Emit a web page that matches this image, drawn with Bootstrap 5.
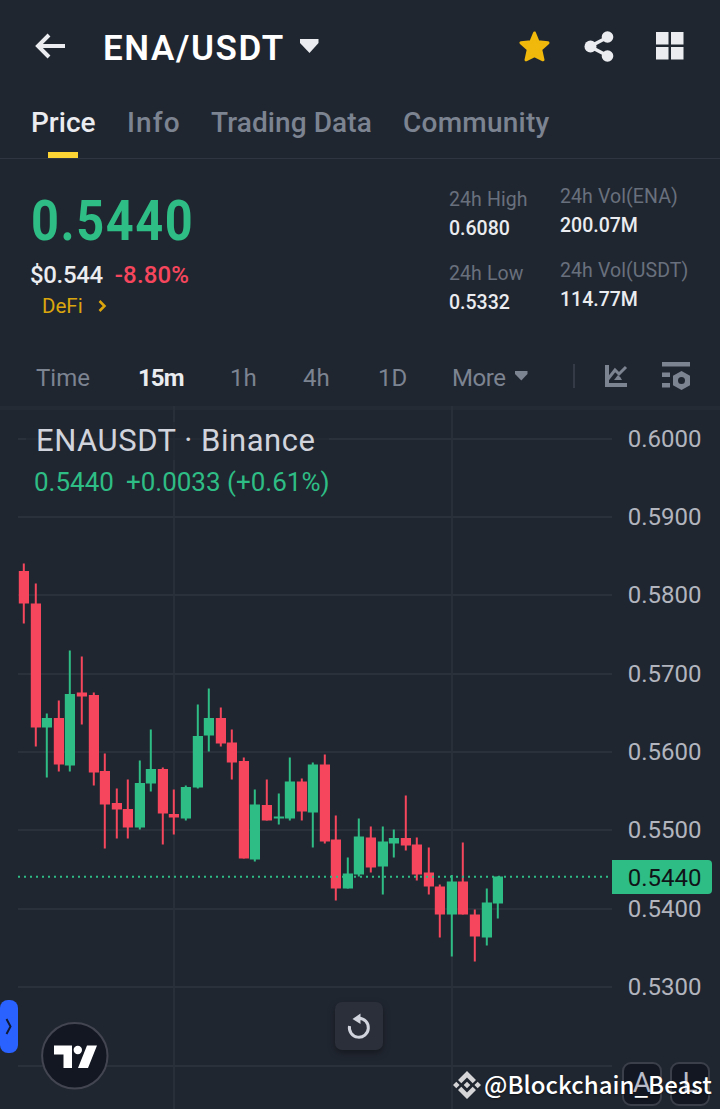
<!DOCTYPE html>
<html lang="en">
<head>
<meta charset="utf-8">
<meta name="viewport" content="width=device-width, initial-scale=1">
<title>ENA/USDT</title>
<link rel="stylesheet" href="https://cdn.jsdelivr.net/npm/bootstrap@5.3.0/dist/css/bootstrap.min.css">
<style>
:root{--up:#2ebd85;--down:#f6465d;--muted:#7c8391;--light:#eaecef;--base:#202630}
html,body{width:720px;height:1109px;overflow:hidden}
body{background:var(--base);font-family:Roboto,"Noto Sans",sans-serif;color:var(--light);white-space:nowrap}
svg{display:block}
.topbar{height:98px;padding:0 36px 6px 35px}
.pair{font-size:35px;font-weight:600;line-height:40px;color:#fff;margin-left:37px;letter-spacing:1.6px;padding-top:5px}
.pair-caret{margin-left:15px}
.tabs-line{display:grid;grid-template-columns:96px 84px 192px 1fr;height:61px;padding-left:31px;border-bottom:1px solid #303641;font-size:28px;font-weight:500;line-height:50px;color:var(--muted)}
.tab-on{color:var(--light);position:relative}
.tab-on::after{content:"";position:absolute;left:17px;bottom:0;width:30px;height:6px;background:#fcd535}
.ticker{display:grid;grid-template-columns:418px 111px 1fr;height:186px;padding:0 0 0 31px}
.last-price{font-size:56px;font-weight:700;line-height:60px;color:var(--up);padding-top:32px;transform:scaleX(.87);transform-origin:0 0;letter-spacing:1.8px}
.fiat{font-size:24px;font-weight:500;line-height:30px;margin:9px 0 0 -1px;letter-spacing:-.35px}
.tag-line{font-size:20.5px;line-height:26px;color:#dba60d;margin:3px 0 0 11px}
.stat-name{font-size:19.5px;line-height:28px;color:#69707d;letter-spacing:.1px}
.stat-val{font-size:19.5px;font-weight:500;line-height:28px;margin:1px 0 17px;letter-spacing:0}
.intervals{display:grid;grid-template-columns:102px 92px 73px 75px 74px 121px 32px 58px 1fr;height:61px;padding-left:36px;font-size:24px;line-height:66px;color:var(--muted)}
.chart-area{height:703px}
.legend{left:26px;top:16px}
.legend-name{font-size:31px;line-height:38px;color:#d1d4dc;letter-spacing:.53px;padding:0 8px 0 10px;background:#202630a0}
.legend-val{font-size:26px;line-height:36px;color:var(--up);margin:4px 0 0 8px}
.axis{font:24px Roboto,sans-serif;fill:#b2b5be}
.pull{left:0;top:594px;width:18px;height:53px;border-radius:8px;background:#2962ff}
.tv{left:41px;top:616px}
.reset{left:335px;top:596px;width:48px;height:48px;border-radius:7px;background:#2a2f39;box-shadow:0 3px 7px rgba(0,0,0,.35)}
.scale-btn{top:656px;width:40px;height:44px;border:2px solid #3b3f4a;border-radius:9px;background:#131722;color:#b9bcc8;font-size:28px;line-height:38px;text-align:center}
.credit{left:453px;top:662px;font:500 24px/32px "Noto Sans CJK SC",sans-serif;color:#fff;text-shadow:0 1px 2px #0008;letter-spacing:.06px}
</style>
</head>
<body>
<header class="topbar d-flex align-items-center">
  <svg width="31" height="26" viewBox="0 0 31 26" fill="none" stroke="#eaecef" stroke-width="4"><path d="M30 13H3M14 2 3 13l11 11"/></svg>
  <div class="pair">ENA/USDT</div>
  <svg class="pair-caret" width="19" height="18" viewBox="0 0 19 18" fill="#eaecef"><path d="M0 2h18.500v4L9.500 16 0 6z"/></svg>
  <svg class="ms-auto" width="31" height="31" viewBox="0 0 31 31" fill="#f0b90b" stroke="#f0b90b" stroke-width="3" stroke-linejoin="round"><path d="M15.500 2l3.600 8.700 9.900 1.100-7.300 6.600 2.300 10.400-8.500-4.200L7 28.800l2.300-10.400L2 11.800l9.900-1.100z"/></svg>
  <svg style="margin-left:34px" width="30" height="31" viewBox="0 0 30 31" fill="#eaecef"><path d="M24 6 6 15.500 24 25" fill="none" stroke="#eaecef" stroke-width="3.500"/><circle cx="6.500" cy="15.500" r="6"/><circle cx="23.500" cy="6" r="5.800"/><circle cx="23.500" cy="25" r="5.800"/></svg>
  <svg style="margin-left:42px" width="28" height="28" viewBox="0 0 28 28" fill="#eaecef"><path d="M0 0h12.500v12.500H0zM15 0h12.500v12.500H15zM0 15h12.500v12.500H0zM15 15h12.500v12.500H15z"/></svg>
</header>
<nav class="tabs-line"><div class="tab-on">Price</div><div style="letter-spacing:1.1px">Info</div><div style="letter-spacing:.1px">Trading Data</div><div style="letter-spacing:.25px">Community</div></nav>
<section class="ticker">
  <div>
    <div class="last-price">0.5440</div>
    <div class="fiat d-flex"><span>$0.544</span><span style="color:var(--down);margin-left:12px;letter-spacing:.15px">-8.80%</span></div>
    <div class="tag-line d-flex align-items-center"><span>DeFi</span><svg style="margin-left:15px" width="9" height="12" viewBox="0 0 9 12" fill="none" stroke="#dba60d" stroke-width="2.500"><path d="M1.500 1 6.500 6l-5 5"/></svg></div>
  </div>
  <div style="padding-top:27px"><div class="stat-name">24h High</div><div class="stat-val">0.6080</div><div class="stat-name">24h Low</div><div class="stat-val">0.5332</div></div>
  <div style="padding-top:24px"><div class="stat-name">24h Vol(ENA)</div><div class="stat-val">200.07M</div><div class="stat-name">24h Vol(USDT)</div><div class="stat-val">114.77M</div></div>
</section>
<div class="intervals">
  <div>Time</div><div class="fw-bold" style="color:var(--light);letter-spacing:-.9px">15m</div><div>1h</div><div>4h</div><div>1D</div>
  <div class="d-flex"><span style="letter-spacing:-.4px">More</span><svg style="margin:26px 0 0 9px" width="13" height="10" viewBox="0 0 13 10" fill="#7c8391"><path d="M0 0h12.500v3L6.300 9.500 0 3z"/></svg></div>
  <div><svg style="margin-top:19px" width="2" height="24"><path d="M1 0v24" stroke="#343b47" stroke-width="2"/></svg></div>
  <svg style="margin-top:19px" width="24" height="24" viewBox="0 0 24 24" fill="#7c8391"><path d="M0 1h4v18h18v4H0z"/><path d="m3 15 7-9 4 4 7-7" fill="none" stroke="#7c8391" stroke-width="3"/><path d="m13 11 2.500 2.500L17 16H9z"/></svg>
  <svg style="margin:16px 0 0 -1px" width="29" height="29" viewBox="0 0 29 29" fill="#7c8391"><path d="M0 1h28v4.500H0zM0 11.500h8V16H0zM0 22h8v4.500H0z"/><path fill-rule="evenodd" d="m19.500 10 8.500 4.800v9.400L19.500 29 11 24.200v-9.400zM19.500 16a3.500 3.500 0 1 0 0 7 3.500 3.500 0 0 0 0-7z"/></svg>
</div>
<main class="chart-area position-relative">
  <svg id="chart" width="720" height="703" viewBox="0 406 720 703"></svg>
  <div class="legend position-absolute">
    <div class="legend-name">ENAUSDT · Binance</div>
    <div class="legend-val"><span>0.5440</span><span style="margin-left:12px">+0.0033 (+0.61%)</span></div>
  </div>
  <div class="pull position-absolute"><svg width="18" height="53" fill="none" stroke="#111a35" stroke-width="2"><path d="m6.500 19 4 7.500-4 7.500"/></svg></div>
  <svg class="tv position-absolute" width="68" height="68" viewBox="0 0 68 68" fill="#fff"><circle cx="33.800" cy="33.800" r="32.700" fill="#131722" stroke="#434651" stroke-width="2"/><path d="M13 23.500h18V46h-8.500V32.500H13z"/><circle cx="36.800" cy="28" r="4.200"/><path d="M46 23.500h10L47 46H37z"/></svg>
  <div class="reset position-absolute"><svg width="48" height="48" viewBox="0 0 48 48"><path d="M14.500 24A9.500 9.500 0 1 0 24 16.200" fill="none" stroke="#d1d4dc" stroke-width="3"/><path d="m17.500 17 8-5.500v10.500z" fill="#d1d4dc"/></svg></div>
  <div class="scale-btn position-absolute" style="left:622px">A</div>
  <div class="scale-btn position-absolute" style="left:670px">L</div>
  <div class="credit position-absolute d-flex align-items-center">
    <svg width="28" height="28" viewBox="0 0 28 28" fill="#d5d5d7" style="margin-top:1px"><path d="m14 0 9 9-3.300 3.300L14 6.600l-5.700 5.700L5 9zM14 28l9-9-3.300-3.300L14 21.400l-5.700-5.700L5 19zM14 10.700l3.300 3.300-3.300 3.300-3.300-3.300zM3.300 10.700 6.600 14l-3.300 3.300L0 14zM24.700 10.700 28 14l-3.300 3.300-3.300-3.300z"/></svg>
    <span style="margin-left:3px">@Blockchain_Beast</span>
  </div>
</main>
<script src="https://cdn.jsdelivr.net/npm/bootstrap@5.3.0/dist/js/bootstrap.bundle.min.js"></script>
<script>
// Each candle: centre x, wick top, wick bottom, body top, body bottom, rising (1) or falling (0)
const candles = [
[24,563.5,623.5,571,603.5,0],[36,583.5,746.5,603.5,727.5,0],[47,713.5,777.5,718,727.5,1],[59,700.5,771.5,718,764.5,0],
[70,650.5,771.5,694,765.5,1],[82,656.5,724.5,692.5,696.5,0],[94,692.5,785.5,695,772.5,0],[105,753.5,848.5,771,804.5,0],
[117,788.5,838.5,803,809.5,0],[128,779.5,838.5,809,827.5,0],[140,760.5,829.5,783,827.5,1],[151,729.5,791.5,769,783.5,1],
[163,767.5,844.5,769,813.5,0],[174,789.5,834.5,814,817.5,0],[186,785.5,820.5,787,818.5,1],[198,704.5,788.5,736,787.5,1],
[209,688.5,751.5,718,735.5,1],[221,707.5,746.5,718,743.5,0],[232,729.5,779.5,742.5,762.5,0],[244,757.5,858.5,761,858.5,0],
[255,789.5,861.5,804.5,859.5,1],[267,779.5,820.5,805,820.5,0],[279,793.5,824.5,816.5,818.5,1],[290,757.5,820.5,781.5,818.5,1],
[302,778.5,820.5,781.5,811.5,0],[313,762.5,847.5,764.5,812.5,1],[325,754.5,843.5,764.5,841.5,0],[336,815.5,900.5,839.5,888.5,0],
[348,857.5,888.5,873.5,888.5,1],[359,818.5,876.5,836.5,874.5,1],[371,826.5,872.5,837.5,867.5,0],[383,826.5,894.5,841.5,866.5,1],
[394,829.5,857.5,838,843.5,1],[406,795.5,850.5,838,845.5,0],[417,837.5,880.5,844.5,874.5,0],[429,847.5,894.5,872.5,886.5,0],
[440,884.5,937.5,886.5,914.5,0],[452,875,956.5,881.5,914.5,1],[463,842.5,914.5,881.5,914.5,0],[475,909.5,961.5,914.5,936.5,0],
[487,888.5,945.5,902.5,937.5,1],[498,876.5,918.5,876.5,903.5,1]];
const rows = [439,517,595,674,752,830,909,987,1066];
let s = '<rect y="406" width="720" height="4" fill="#252b35"/><g stroke="#2b313b" stroke-width="1.800">';
rows.forEach(y => s += `<path d="M18 ${y}H612"/>`);
s += '<path d="M174 406V1109M452 406V1109"/></g>';
for (const [x,h,l,t,b,up] of candles)
  s += `<g fill="${up ? '#2ebd85' : '#f6465d'}"><rect x="${x-1.2}" y="${h}" width="2" height="${l-h}"/><rect x="${x-5.2}" y="${t}" width="10.200" height="${b-t}"/></g>`;
s += '<path d="M18 876.700H609" stroke="#2ebd85" stroke-width="2" stroke-dasharray="2 4"/>';
rows.slice(0,8).forEach((y,i) => s += `<text class="axis" x="627.700" y="${y+8.4}">${(0.6-i*0.01).toFixed(4)}</text>`);
s += '<path d="M612 860h96a4 4 0 0 1 4 4v26a4 4 0 0 1-4 4h-96z" fill="#2ebd85"/><text class="axis" x="627.700" y="886" style="fill:#101418">0.5440</text>';
document.getElementById('chart').innerHTML = s;
</script>
</body>
</html>
